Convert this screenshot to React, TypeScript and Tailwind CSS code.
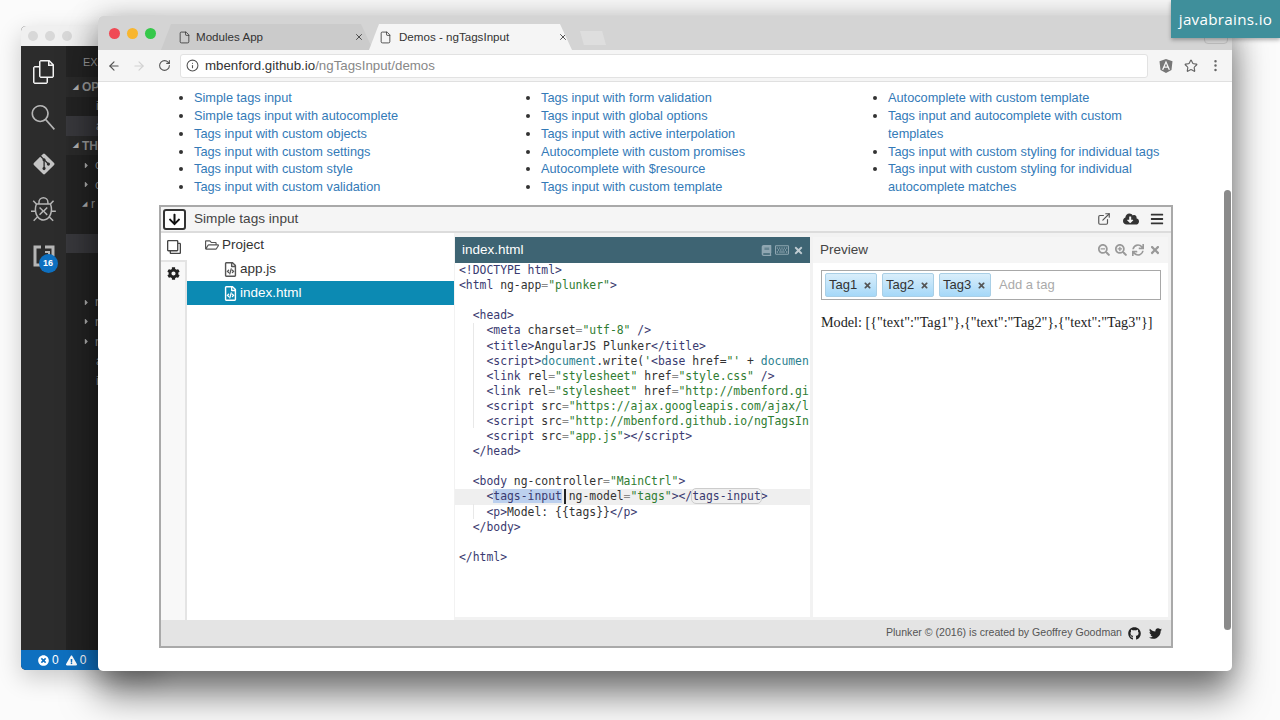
import React from "react";
import { ArrowLeft, ArrowRight, RotateCw, Info, Star, MoreVertical, File, X, ExternalLink } from "lucide-react";
import { VscFiles, VscSearch, VscDebug } from "react-icons/vsc";
import {
    FaGitAlt, FaAngular, FaArrowDown, FaCloudDownloadAlt, FaBars, FaRegClone, FaCog,
    FaRegFolderOpen, FaRegFileCode, FaBook, FaRegKeyboard, FaTimes, FaSearchMinus, FaSearchPlus, FaSync,
    FaGithub, FaTwitter, FaTimesCircle, FaExclamationTriangle, FaCaretRight,
} from "react-icons/fa";

const col1 = [
    "Simple tags input",
    "Simple tags input with autocomplete",
    "Tags input with custom objects",
    "Tags input with custom settings",
    "Tags input with custom style",
    "Tags input with custom validation",
];
const col2 = [
    "Tags input with form validation",
    "Tags input with global options",
    "Tags input with active interpolation",
    "Autocomplete with custom promises",
    "Autocomplete with $resource",
    "Tags input with custom template",
];
const col3 = [
    "Autocomplete with custom template",
    "Tags input and autocomplete with custom templates",
    "Tags input with custom styling for individual tags",
    "Tags input with custom styling for individual autocomplete matches",
];

// sidebar rows of the editor window behind the browser
const explorerRows = [
    { label: "OPE", kind: "head" },
    { label: "i", kind: "file" },
    { label: "a", kind: "active" },
    { label: "THI", kind: "head" },
    { label: "c", kind: "dir" },
    { label: "c", kind: "dir" },
    { label: "r", kind: "open" },
    { label: "", kind: "file" },
    { label: "", kind: "active" },
    { label: "", kind: "file" },
    { label: "", kind: "file" },
    { label: "r", kind: "dir" },
    { label: "r", kind: "dir" },
    { label: "r", kind: "dir" },
    { label: "a", kind: "file" },
    { label: "i", kind: "file" },
];

const T = ({ children }: { children: React.ReactNode }) => <span className="text-[#3a3a70]">{children}</span>;
const S = ({ children }: { children: React.ReactNode }) => <span className="text-[#2f7d32]">{children}</span>;
const E = () => <span className="text-[#8a8a8a]">=</span>;

const codeLines: React.ReactNode[] = [
    <><T>&lt;!DOCTYPE html&gt;</T></>,
    <><T>&lt;html</T> ng-app<E /><S>"plunker"</S><T>&gt;</T></>,
    "",
    <>  <T>&lt;head&gt;</T></>,
    <>    <T>&lt;meta</T> charset<E /><S>"utf-8"</S> <T>/&gt;</T></>,
    <>    <T>&lt;title&gt;</T>AngularJS Plunker<T>&lt;/title&gt;</T></>,
    <>    <T>&lt;script&gt;</T><span className="text-[#2b7f8f]">document</span>.write(<S>'</S><T>&lt;base</T> href=<S>"'</S> + <span className="text-[#2b7f8f]">documen</span></>,
    <>    <T>&lt;link</T> rel<E /><S>"stylesheet"</S> href<E /><S>"style.css"</S> <T>/&gt;</T></>,
    <>    <T>&lt;link</T> rel<E /><S>"stylesheet"</S> href<E /><S>"http://mbenford.gi</S></>,
    <>    <T>&lt;script</T> src<E /><S>"https://ajax.googleapis.com/ajax/l</S></>,
    <>    <T>&lt;script</T> src<E /><S>"http://mbenford.github.io/ngTagsIn</S></>,
    <>    <T>&lt;script</T> src<E /><S>"app.js"</S><T>&gt;&lt;/script&gt;</T></>,
    <>  <T>&lt;/head&gt;</T></>,
    "",
    <>  <T>&lt;body</T> ng-controller<E /><S>"MainCtrl"</S><T>&gt;</T></>,
    <>    <T>&lt;</T><span className="bg-[#bcd0ee] text-[#3a3a70]">tags-input</span> ng-model<E /><S>"tags"</S><T>&gt;&lt;/</T><span className="rounded-sm outline outline-[#ccc] text-[#3a3a70]">tags-input</span><T>&gt;</T></>,
    <>    <T>&lt;p&gt;</T>Model: {"{{tags}}"}<T>&lt;/p&gt;</T></>,
    <>  <T>&lt;/body&gt;</T></>,
    "",
    <><T>&lt;/html&gt;</T></>,
];

const LinkList = ({ items, width }: { items: string[]; width: string }) => (
    <ul className={`list-disc pl-0 ${width}`}>
        {items.map((item) => (
            <li key={item} className="marker:text-[#333]">
                <a className="text-[#337ab7]">{item}</a>
            </li>
        ))}
    </ul>
);

const TagPill = ({ label }: { label: string }) => (
    <div className="flex h-[24px] w-[52px] items-center rounded-[2px] border border-[#a9cfe6] bg-gradient-to-b from-[#d9eefb] to-[#a5d8f8] pl-[3px] text-[13px] text-[#333]">
        <span>{label}</span>
        <FaTimes className="ml-auto mr-[4px] text-[#555]" size={9} />
    </div>
);

const EditorWindow = () => (
    <div className="absolute left-[21px] top-[26px] flex h-[644px] w-[140px] flex-col overflow-hidden rounded-[5px] bg-[#252526] shadow-[0_8px_24px_rgba(0,0,0,0.2)]">
        <div className="flex h-[20px] items-center gap-[7px] bg-[#f0f0f0] pl-[7px]">
            <span className="h-[10px] w-[10px] rounded-full bg-[#d8d8d8]" />
            <span className="h-[10px] w-[10px] rounded-full bg-[#d8d8d8]" />
            <span className="h-[10px] w-[10px] rounded-full bg-[#d8d8d8]" />
        </div>
        <div className="flex flex-1">
            <div className="relative flex w-[45px] flex-col items-center bg-[#2c2c2c] pt-[14px]">
                <VscFiles className="text-[#f2f2f2]" size={24} />
                <VscSearch className="mt-[21px] -scale-x-100 text-[#b5b5b5]" size={25} />
                <FaGitAlt className="mt-[22px] text-[#c4c4c4]" size={24} />
                <VscDebug className="mt-[21px] text-[#b5b5b5]" size={25} />
                <div className="relative mt-[23px] h-[22px] w-[22px]">
                    <svg viewBox="0 0 22 22" className="h-[22px] w-[22px]" fill="none" stroke="#b5b5b5" strokeWidth="3">
                        <path d="M8 2H2v18h9" />
                        <path d="M12 2h8v9" />
                        <path d="M12 7h4v4" strokeWidth="2" />
                    </svg>
                    <span className="absolute left-[6px] top-[9px] flex h-[19px] w-[19px] items-center justify-center rounded-full bg-[#0e70c0] text-[9px] font-bold text-white">
                        16
                    </span>
                </div>
            </div>
            <div className="flex-1 bg-[#232323] text-[12px] text-[#9a9a9a]">
                <div className="h-[31px] pl-[17px] pt-[8px] text-[11px]">EXPLORER</div>
                {explorerRows.map((row, i) => (
                    <div
                        key={i}
                        className={`flex h-[19.6px] items-center ${row.kind === "head" ? "bg-[#2a2a2a] pl-[7px] font-bold" : ""} ${row.kind === "active" ? "bg-[#38383c] pl-[30px]" : ""} ${row.kind === "file" ? "pl-[30px]" : ""} ${row.kind === "dir" || row.kind === "open" ? "pl-[16px]" : ""}`}
                    >
                        {row.kind === "dir" && <FaCaretRight className="mr-[4px] text-[#b0b0b0]" size={9} />}
                        {(row.kind === "open" || row.kind === "head") && <span className="mr-[4px] text-[7px] text-[#b0b0b0]">◢</span>}
                        {row.label}
                    </div>
                ))}
            </div>
        </div>
        <div className="flex h-[20px] items-center bg-[#0e70c0] pl-[17px] text-[12px] text-white">
            <FaTimesCircle size={11} />
            <span className="ml-[3px]">0</span>
            <FaExclamationTriangle className="ml-[7px]" size={11} />
            <span className="ml-[3px]">0</span>
        </div>
    </div>
);

const BrowserTabs = () => (
    <div className="relative flex h-[34px] items-end bg-[#d4d4d4]">
        <div className="ml-[10px] flex h-[17px] w-[50px] items-center gap-[7px] self-start pl-[1px] pt-[17px]">
            <span className="h-[11px] w-[11px] shrink-0 rounded-full bg-[#f04a55]" />
            <span className="h-[11px] w-[11px] shrink-0 rounded-full bg-[#f8b62f]" />
            <span className="h-[11px] w-[11px] shrink-0 rounded-full bg-[#35c84a]" />
        </div>
        <div className="ml-[3px] flex h-[26px] w-[212px] items-center bg-[#cbcbcb] pl-[16.5px] text-[11.6px] text-[#333] [clip-path:polygon(0_100%,10px_0,200px_0,100%_100%)]">
            <File size={13} strokeWidth={1.5} />
            <span className="ml-[5.5px]">Modules App</span>
            <X className="ml-auto mr-[9px]" size={10} />
        </div>
        <div className="-ml-[4px] flex h-[26px] w-[203px] items-center bg-[#f5f5f5] pl-[9.5px] text-[11.6px] text-[#333] [clip-path:polygon(0_100%,10px_0,191px_0,100%_100%)]">
            <File size={13} strokeWidth={1.5} />
            <span className="ml-[7.5px]">Demos - ngTagsInput</span>
            <X className="ml-auto mr-[4px]" size={10} />
        </div>
        <div className="mb-[5px] ml-[8px] h-[14px] w-[26px] bg-[#dedede] [clip-path:polygon(0_0,85%_0,100%_100%,15%_100%)]" />
        <div className="absolute right-[4px] top-[18px] h-[10px] w-[24px] rounded-sm border border-[#bbb]" />
    </div>
);

const BrowserToolbar = () => (
    <div className="flex h-[32px] items-center border-b border-[#e0e0e0] bg-[#f5f5f5] pl-[9px] pr-[8px]">
        <ArrowLeft className="text-[#555]" size={14} />
        <ArrowRight className="ml-[11px] text-[#d2d2d2]" size={14} />
        <RotateCw className="ml-[12px] text-[#555]" size={13} />
        <div className="ml-[9px] flex h-[24px] w-[968px] items-center rounded-[3px] border border-[#e2e2e2] bg-white pl-[5px] text-[13.3px]">
            <Info className="text-[#555]" size={13} />
            <span className="ml-[6px] text-[#333]">mbenford.github.io</span>
            <span className="text-[#888]">/ngTagsInput/demos</span>
        </div>
        <FaAngular className="ml-[10px] text-[#777]" size={16} />
        <Star className="ml-[10px] text-[#666]" size={14} />
        <MoreVertical className="ml-[10px] text-[#666]" size={15} />
    </div>
);

const TreePane = () => (
    <div className="w-[267px] bg-white text-[13.5px] text-[#333]">
        <div className="flex h-[24px] items-center pl-[18px]">
            <FaRegFolderOpen className="text-[#555]" size={14} />
            <span className="ml-[3px]">Project</span>
        </div>
        <div className="flex h-[24px] items-center pl-[36px]">
            <FaRegFileCode className="text-[#555]" size={15} />
            <span className="ml-[2px]">app.js</span>
        </div>
        <div className="flex h-[24px] items-center bg-[#0c8ab3] pl-[36px] text-white">
            <FaRegFileCode size={15} />
            <span className="ml-[2px]">index.html</span>
        </div>
    </div>
);

const CodePane = () => (
    <div className="mb-[3px] ml-[1px] mt-[4px] flex w-[355px] flex-col overflow-hidden">
        <div className="flex h-[26px] items-center bg-[#3e6473] pl-[7px] pr-[6px] text-[13.5px] text-white">
            <span>index.html</span>
            <FaBook className="ml-auto text-[#8fa6b1]" size={11} />
            <FaRegKeyboard className="ml-[3px] text-[#8fa6b1]" size={14} />
            <FaTimes className="ml-[4px] text-[#c0ccd2]" size={11} />
        </div>
        <div className="relative flex-1 overflow-hidden bg-white font-['DejaVu_Sans_Mono','Liberation_Mono',monospace] text-[11.4px] leading-[15.1px] text-[#333]">
            <div className="absolute left-[18px] top-[60px] h-[105px] w-px bg-[#e8e8e8]" />
            <div className="absolute left-[18px] top-[241px] h-[15px] w-px bg-[#e8e8e8]" />
            {codeLines.map((line, i) => (
                <div key={i} className={`h-[15.1px] whitespace-pre pl-[4px] ${i === 15 ? "bg-[#efefef]" : ""}`}>
                    {line}
                </div>
            ))}
            {/* text cursor over the selected word */}
            <div className="absolute left-[109px] top-[226px] h-[15px] w-[2px] bg-[#222]" />
        </div>
    </div>
);

const PreviewPane = () => (
    <div className="mb-[3px] ml-[3px] mt-[4px] flex w-[355px] flex-col">
        <div className="flex h-[26px] items-center bg-[#f5f5f5] pl-[7px] pr-[7px] text-[13.5px] text-[#444]">
            <span>Preview</span>
            <FaSearchMinus className="ml-auto text-[#999]" size={12} />
            <FaSearchPlus className="ml-[5px] text-[#999]" size={12} />
            <FaSync className="ml-[5px] text-[#999]" size={12} />
            <FaTimes className="ml-[5px] text-[#999]" size={12} />
        </div>
        <div className="flex-1 bg-white px-[8px] pt-[7px]">
            <div className="flex h-[30px] w-[340px] items-center gap-[5px] border border-[#a8a8a8] pl-[3px]">
                <TagPill label="Tag1" />
                <TagPill label="Tag2" />
                <TagPill label="Tag3" />
                <span className="ml-[3px] text-[13px] text-[#aaa]">Add a tag</span>
            </div>
            <p className="mt-[13px] whitespace-nowrap font-['Liberation_Serif',serif] text-[14.2px] leading-[18px] text-[#222]">
                Model: {'[{"text":"Tag1"},{"text":"Tag2"},{"text":"Tag3"}]'}
            </p>
        </div>
    </div>
);

const PlunkerFrame = () => (
    <div className="ml-[61px] mt-[9px] flex h-[443px] w-[1014px] flex-col border-2 border-[#a9a9a9]">
        <div className="flex h-[26px] items-center border-b-2 border-[#dcdcdc] bg-[#f5f5f5] pl-[2px] pr-[7px]">
            <div className="flex h-[21px] w-[23px] items-center justify-center rounded-[3px] border-2 border-[#333] bg-white">
                <FaArrowDown className="text-[#111]" size={13} />
            </div>
            <span className="ml-[8px] text-[13.6px] text-[#444]">Simple tags input</span>
            <ExternalLink className="ml-auto text-[#555]" size={14} />
            <FaCloudDownloadAlt className="ml-[12px] text-[#333]" size={16} />
            <FaBars className="ml-[11px] text-[#333]" size={14} />
        </div>
        <div className="flex flex-1 bg-[#f2f2f2]">
            <div className="flex w-[26px] flex-col border-r-2 border-[#e4e4e4] bg-[#f8f8f8]">
                <div className="-mr-[2px] flex h-[27px] items-center justify-center bg-white">
                    <FaRegClone className="-scale-x-100 text-[#444]" size={14} />
                </div>
                <div className="flex h-[25px] items-center justify-center border-t-2 border-[#e4e4e4]">
                    <FaCog className="text-[#222]" size={13} />
                </div>
            </div>
            <TreePane />
            <CodePane />
            <PreviewPane />
        </div>
        <div className="flex h-[26px] items-center justify-end bg-[#e4e4e4] pr-[9px] text-[10.6px] text-[#555]">
            <span>Plunker © (2016) is created by Geoffrey Goodman</span>
            <FaGithub className="ml-[6px] text-[#222]" size={13} />
            <FaTwitter className="ml-[8px] text-[#222]" size={13} />
        </div>
    </div>
);

const BrowserWindow = () => (
    <div className="absolute left-[98px] top-[16px] flex h-[655px] w-[1134px] flex-col overflow-hidden rounded-[5px] bg-white shadow-[0_24px_36px_rgba(0,0,0,0.5),0_0_30px_rgba(0,0,0,0.22)]">
        <BrowserTabs />
        <BrowserToolbar />
        <div className="relative flex-1 pt-[7px]">
            <div className="ml-[96px] grid grid-cols-[347px_347px_1fr] text-[12.75px] leading-[17.85px]">
                <LinkList items={col1} width="w-[300px]" />
                <LinkList items={col2} width="w-[300px]" />
                <LinkList items={col3} width="w-[280px]" />
            </div>
            <PlunkerFrame />
            <div className="absolute right-[1px] top-[108px] h-[440px] w-[7px] rounded-full bg-[#8a8a8a]" />
        </div>
    </div>
);

export default function App() {
    return (
        <div className="relative h-[720px] w-[1280px] overflow-hidden bg-[#fbfbfb] font-['Liberation_Sans',Arial,sans-serif] antialiased">
            <EditorWindow />
            <BrowserWindow />
            <div className="absolute right-0 top-0 flex h-[38px] w-[109px] items-center justify-center bg-[#3f8f9b] font-['Open_Sans',sans-serif] text-[15.2px] tracking-[0.3px] text-white shadow-[0_2px_4px_rgba(0,0,0,0.3)]">
                javabrains.io
            </div>
        </div>
    );
}
